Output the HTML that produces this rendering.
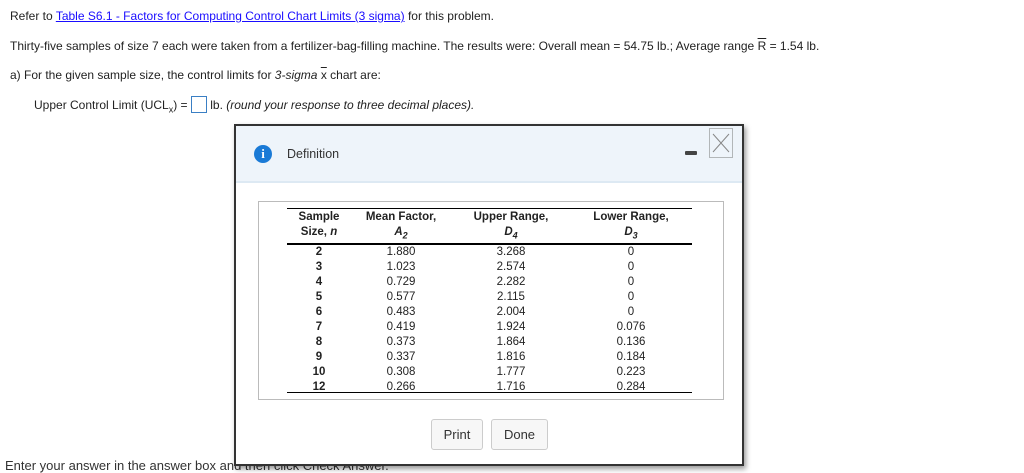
<!DOCTYPE html>
<html><head><style>
body{margin:0;width:1024px;height:472px;position:relative;overflow:hidden;background:#fff;font-family:"Liberation Sans",Arial,sans-serif;font-size:12px;color:#222}
.a{position:absolute;white-space:nowrap}
a{color:#1a0dff;text-decoration:underline}
sub{line-height:0}
.dlg{position:absolute;left:234px;top:124px;width:506px;height:338px;border:2px solid #333;background:#fff;box-shadow:2px 3px 5px rgba(0,0,0,.4)}
.hd{position:absolute;left:0;top:0;width:506px;height:55px;background:#eef4fa;border-bottom:2px solid #dde9f3}
.tb{position:absolute;left:22px;top:75px;width:464px;height:197px;border:1px solid #bbb}
.c{position:absolute;text-align:center;font-size:11.5px}
.btn{position:absolute;top:293px;height:29px;border:1px solid #ccc;border-radius:3px;background:#f7f7f7;font-size:13px;line-height:29px;text-align:center;color:#333}
</style></head><body>
<div class="a" style="left:10px;top:9px">Refer to <a>Table S6.1 - Factors for Computing Control Chart Limits (3 sigma)</a> for this problem.</div>
<div class="a" style="left:10px;top:39px">Thirty-five samples of size 7 each were taken from a fertilizer-bag-filling machine. The results were: Overall mean = 54.75 lb.; Average range <span style="text-decoration:overline">R</span> = 1.54 lb.</div>
<div class="a" style="left:10px;top:68px">a) For the given sample size, the control limits for <i>3-sigma</i> <span style="text-decoration:overline">x</span> chart are:</div>
<div class="a" style="left:34px;top:98px">Upper Control Limit (UCL<sub style="font-size:9px">x</sub>) = <span style="display:inline-block;width:14px;height:15px;border:1px solid #3a7fc4;vertical-align:middle;margin-top:-3px"></span> lb. <i>(round your response to three decimal places).</i></div>
<div class="a" style="left:5px;top:458px;font-size:13px;color:#333">Enter your answer in the answer box and then click Check Answer.</div>
<div class="dlg">
 <div class="hd">
  <div class="a" style="left:18px;top:19px;width:18px;height:18px;border-radius:50%;background:#1a7ad6;color:#fff;font-weight:bold;font-size:13px;text-align:center;line-height:18px;font-family:'Liberation Serif',serif">i</div>
  <div class="a" style="left:51px;top:21px;font-size:12.5px;color:#333">Definition</div>
  <div class="a" style="left:449px;top:25px;width:12px;height:4px;background:#444;border-radius:1px"></div>
  <svg class="a" style="left:473px;top:2px" width="24" height="30"><rect x="0.5" y="0.5" width="23" height="29" fill="none" stroke="#777" stroke-dasharray="1,1"/><path d="M4 6L20 24M20 6L4 24" stroke="#888" stroke-width="1"/></svg>
 </div>
 <div class="tb">
  <div class="a" style="left:28px;top:6px;width:405px;height:1px;background:#000"></div>
  <div class="a" style="left:28px;top:41px;width:405px;height:2px;background:#000"></div>
  <div class="a" style="left:28px;top:190px;width:405px;height:1px;background:#000"></div>
  <div class="c" style="left:30px;top:8px;width:60px;font-weight:bold;line-height:15px">Sample<br>Size, <i>n</i></div>
  <div class="c" style="left:92px;top:8px;width:100px;font-weight:bold;line-height:15px">Mean Factor,<br><i>A<sub style="font-size:9px">2</sub></i></div>
  <div class="c" style="left:202px;top:8px;width:100px;font-weight:bold;line-height:15px">Upper Range,<br><i>D<sub style="font-size:9px">4</sub></i></div>
  <div class="c" style="left:322px;top:8px;width:100px;font-weight:bold;line-height:15px">Lower Range,<br><i>D<sub style="font-size:9px">3</sub></i></div>
  <div class="c" style="left:30px;top:43px;width:60px;font-weight:bold;line-height:15px">2<br>3<br>4<br>5<br>6<br>7<br>8<br>9<br>10<br>12</div>
  <div class="c" style="left:92px;top:43px;width:100px;line-height:15px">1.880<br>1.023<br>0.729<br>0.577<br>0.483<br>0.419<br>0.373<br>0.337<br>0.308<br>0.266</div>
  <div class="c" style="left:202px;top:43px;width:100px;line-height:15px">3.268<br>2.574<br>2.282<br>2.115<br>2.004<br>1.924<br>1.864<br>1.816<br>1.777<br>1.716</div>
  <div class="c" style="left:322px;top:43px;width:100px;line-height:15px">0<br>0<br>0<br>0<br>0<br>0.076<br>0.136<br>0.184<br>0.223<br>0.284</div>
 </div>
 <div class="btn" style="left:195px;width:50px">Print</div>
 <div class="btn" style="left:255px;width:55px">Done</div>
</div>
</body></html>
